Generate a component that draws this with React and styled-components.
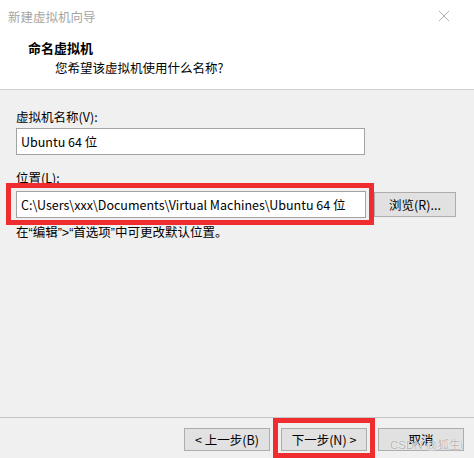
import React from 'react';
import styled, { createGlobalStyle } from 'styled-components';

const GlobalStyle = createGlobalStyle`
	html, body {
		margin: 0;
		padding: 0;
		background: #f0f0f0;
	}
	body {
		font-family: "Noto Sans CJK SC", "Liberation Sans", sans-serif;
		font-size: 13px;
		color: #000;
	}
`;

const Window = styled.div`
	width: 474px;
	height: 458px;
	display: flex;
	flex-direction: column;
	background: #f0f0f0;
	overflow: hidden;
`;

const TitleBar = styled.div`
	height: 32px;
	display: flex;
	align-items: center;
	justify-content: space-between;
	padding: 0 24px 0 8px;
	background: #fff;
	color: #a6a6a6;
	font-size: 12.5px;
`;

const Header = styled.div`
	height: 57px;
	background: #fff;
	border-bottom: 1px solid #cfcfcf;
	padding-left: 28px;
	display: flex;
	flex-direction: column;
`;

const Heading = styled.div`
	font-weight: bold;
	font-size: 13px;
	line-height: 20px;
	margin-top: 6px;
`;

const SubHeading = styled.div`
	font-size: 12.5px;
	line-height: 20px;
	padding-left: 27px;
`;

const Body = styled.div`
	flex: 1;
	padding: 18px 9px 0 16px;
	display: flex;
	flex-direction: column;
`;

const Label = styled.div`
	font-size: 12.5px;
	line-height: 18px;
	margin-top: ${p => p.$gap || 0}px;
`;

const Field = styled.div`
	position: relative;
	width: ${p => p.$width}px;
	height: 27px;
	box-sizing: border-box;
	border: 1px solid #a3a3a3;
	background: #fff;
	display: flex;
	align-items: center;
	padding-left: 4px;
	font-size: 12.5px;
	margin-top: ${p => p.$gap || 0}px;
	white-space: nowrap;

	${p => p.$marked && `
		&::after {
			content: "";
			position: absolute;
			left: -11px;
			top: -9px;
			right: -9px;
			bottom: -8px;
			border: 5px solid #ef2d2f;
			pointer-events: none;
		}
	`}
`;

const FieldRow = styled.div`
	display: flex;
	align-items: center;
	gap: 8px;
	margin-top: ${p => p.$gap || 0}px;
`;

const Button = styled.div`
	position: relative;
	width: ${p => p.$width || 86}px;
	height: ${p => p.$height || 23}px;
	box-sizing: border-box;
	border: 1px solid #adadad;
	background: #e1e1e1;
	display: flex;
	align-items: center;
	justify-content: center;
	font-size: 12.5px;

	${p => p.$marked && `
		&::after {
			content: "";
			position: absolute;
			left: -9px;
			top: -11px;
			right: -9px;
			bottom: -8px;
			border: 5px solid #ef2d2f;
			pointer-events: none;
		}
	`}
`;

const Note = styled.div`
	font-size: 12.5px;
	line-height: 18px;
	margin-top: 5px;
`;

const Quote = styled.span`
	font-family: "Liberation Sans", sans-serif;
`;

const Footer = styled.div`
	height: 41px;
	box-sizing: border-box;
	border-top: 1px solid #c4c4c4;
	display: flex;
	justify-content: flex-end;
	align-items: flex-start;
	padding: 10px 10px 0 0;
	gap: 11px;
`;

const Watermark = styled.span`
	position: absolute;
	right: 0;
	bottom: -2px;
	font-size: 11.5px;
	line-height: 13px;
	font-family: "Liberation Sans", "Noto Sans CJK SC", sans-serif;
	color: #b4b4b4;
	text-shadow: 0 0 1px #fff, 0 0 1px #fff;
	white-space: nowrap;
`;

const Close = () => (
	<svg width="12" height="12" viewBox="0 0 12 12">
		<path d="M1 1 L11 11 M11 1 L1 11" stroke="#b0b0b0" strokeWidth="1" fill="none" />
	</svg>
);

export default function App() {
	return (
		<Window>
			<GlobalStyle />
			<TitleBar>
				<span>新建虚拟机向导</span>
				<Close />
			</TitleBar>
			<Header>
				<Heading>命名虚拟机</Heading>
				<SubHeading>您希望该虚拟机使用什么名称?</SubHeading>
			</Header>
			<Body>
				<Label>虚拟机名称(V):</Label>
				<Field $width={349} $gap={2}>Ubuntu 64 位</Field>
				<Label $gap={14}>位置(L):</Label>
				<FieldRow $gap={4}>
					<Field $width={350} $marked>C:\Users\xxx\Documents\Virtual Machines\Ubuntu 64 位</Field>
					<Button $width={82} $height={25}>浏览(R)...</Button>
				</FieldRow>
				<Note>
					在<Quote>“</Quote>编辑<Quote>”&gt;“</Quote>首选项<Quote>”</Quote>中可更改默认位置。
				</Note>
			</Body>
			<Footer>
				<Button>&lt; 上一步(B)</Button>
				<Button $marked>下一步(N) &gt;</Button>
				<Button>
					取消
					<Watermark>CSDN @狐生i</Watermark>
				</Button>
			</Footer>
		</Window>
	);
}
